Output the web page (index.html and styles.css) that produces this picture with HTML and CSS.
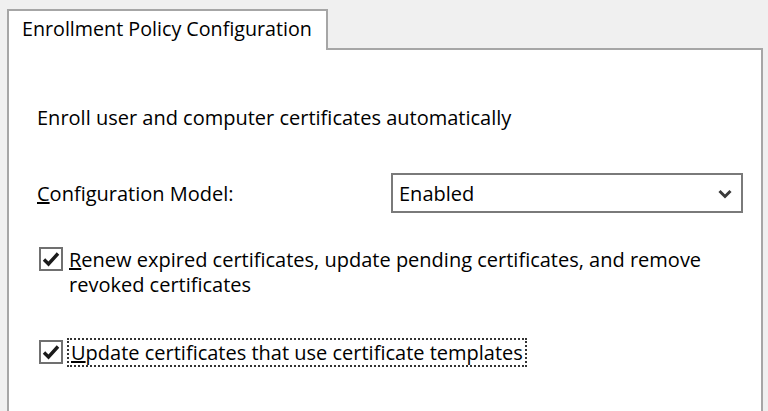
FILE: index.html
```html
<!DOCTYPE html>
<html>
<head>
    <meta charset="UTF-8">
    <title>Enrollment Policy Configuration</title>
    <link rel="stylesheet" href="styles.css">
</head>
<body>
    <div class="tabs">
        <div class="tab">Enrollment Policy Configuration</div>
    </div>

    <div class="panel">
        <p class="intro">Enroll user and computer certificates automatically</p>

        <div class="field">
            <label class="fieldLabel mnemonic">Configuration Model:</label>
            <div class="combo">
                <span>Enabled</span>
                <svg class="chevron" width="14" height="10" viewBox="0 0 14 10">
                    <path d="M1.5 2 L7 7.5 L12.5 2" fill="none" stroke="#3a3a3a" stroke-width="3"/>
                </svg>
            </div>
        </div>

        <div class="check">
            <span class="box">
                <svg width="18" height="16" viewBox="0 0 18 16">
                    <path d="M2 8.5 L6.5 13 L16 2.5" fill="none" stroke="#1a1a1a" stroke-width="3.4"/>
                </svg>
            </span>
            <span class="checkText mnemonic">Renew expired certificates, update pending certificates, and remove revoked certificates</span>
        </div>

        <div class="check second">
            <span class="box">
                <svg width="18" height="16" viewBox="0 0 18 16">
                    <path d="M2 8.5 L6.5 13 L16 2.5" fill="none" stroke="#1a1a1a" stroke-width="3.4"/>
                </svg>
            </span>
            <span class="checkText mnemonic focused">Update certificates that use certificate templates</span>
        </div>
    </div>
</body>
</html>
```

FILE: styles.css
```css
* {
    margin: 0;
    padding: 0;
    box-sizing: border-box;
}

html,
body {
    height: 100%;
}

body {
    display: flex;
    flex-direction: column;
    background: #f0f0f0;
    color: #000;
    font-family: "Open Sans", "Noto Sans", sans-serif;
    font-size: 20px;
    padding: 9px 5px 0 7px;
    overflow: hidden;
}

.tabs {
    display: flex;
}

.tab {
    position: relative;
    z-index: 1;
    width: 321px;
    height: 41px;
    margin-bottom: -2px;
    padding: 5px 0 0 13px;
    background: #fff;
    border: 2px solid #a6a6a6;
    border-bottom: none;
    font-size: 19.7px;
    line-height: 26px;
    white-space: nowrap;
}

.panel {
    flex: 1;
    background: #fff;
    border: 2px solid #a6a6a6;
    border-bottom: none;
    padding: 0 0 0 28px;
}

.intro {
    margin-top: 55px;
    line-height: 26px;
}

.field {
    display: flex;
    align-items: center;
    margin-top: 42px;
}

.fieldLabel {
    width: 354px;
}

.mnemonic::first-letter {
    text-decoration: underline;
}

.combo {
    display: flex;
    align-items: center;
    justify-content: space-between;
    width: 352px;
    height: 40px;
    padding: 0 9px 0 6px;
    border: 2px solid #7a7a7a;
}

.chevron {
    margin-top: 2px;
}

.check {
    display: flex;
    align-items: flex-start;
    margin-top: 34px;
    line-height: 25px;
}

.check.second {
    margin-top: 43px;
}

.box {
    display: flex;
    align-items: center;
    justify-content: center;
    flex: none;
    width: 24px;
    height: 24px;
    margin: 0 6px 0 2px;
    border: 2px solid #707070;
    background: #fff;
}

.checkText {
    width: 670px;
}

.focused {
    width: auto;
    padding: 0 2px;
    outline: 2px dotted #333;
    outline-offset: 0;
}
```
